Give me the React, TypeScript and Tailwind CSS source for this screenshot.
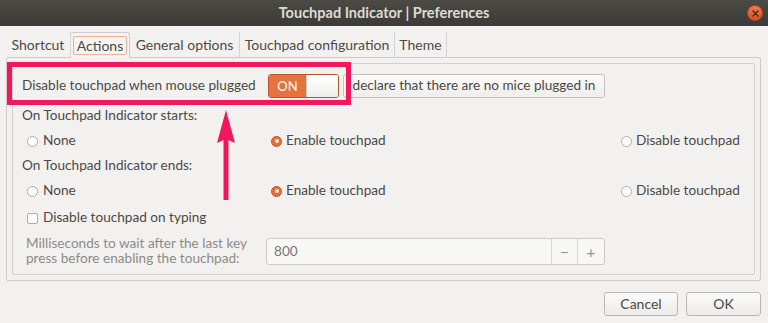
import React from "react";

const Radio = ({ checked }: { checked?: boolean }) =>
  checked ? (
    <span className="inline-flex w-[11px] h-[11px] rounded-full bg-[#e46f3b] border border-[#c2572a] items-center justify-center shrink-0">
      <span className="w-[4px] h-[4px] rounded-full bg-[#fbe9e0]" />
    </span>
  ) : (
    <span className="inline-block w-[11px] h-[11px] rounded-full bg-white border border-[#aeaca8] shrink-0" />
  );

const RadioRow = ({ sel }: { sel: number }) => (
  <div className="flex items-center pl-[14px] h-[14px]">
    <div className="w-[244px] flex items-center gap-[5px]">
      <Radio checked={sel === 0} />
      <span>None</span>
    </div>
    <div className="w-[350px] flex items-center gap-[4px]">
      <Radio checked={sel === 1} />
      <span>Enable touchpad</span>
    </div>
    <div className="flex items-center gap-[4px]">
      <Radio checked={sel === 2} />
      <span>Disable touchpad</span>
    </div>
  </div>
);

export default function App() {
  return (
    <div className="w-[768px] h-[323px] bg-[#f2f1f0] relative overflow-hidden font-['Lato','DejaVu_Sans',sans-serif] text-[13.6px] text-[#4b4a47] leading-none">
      {/* Title bar */}
      <div className="h-[26px] bg-gradient-to-b from-[#4b4a45] to-[#3b3a36] flex items-center justify-center relative">
        <span className="font-bold text-[14.5px] text-[#dfdbd2]">Touchpad Indicator | Preferences</span>
        <div className="absolute left-[747px] top-[5px] w-[16px] h-[16px] rounded-full bg-gradient-to-b from-[#f07a4a] to-[#dd4f1e] border border-[#b8461e] flex items-center justify-center">
          <svg width="7" height="7" viewBox="0 0 7 7">
            <path d="M1 1 L6 6 M6 1 L1 6" stroke="#4a2414" strokeWidth="1.4" strokeLinecap="round" />
          </svg>
        </div>
      </div>

      {/* Tabs */}
      <div className="flex pl-[6px] pt-[6px] h-[31px] text-[14px]">
        <div className="w-[65px] h-[25px] flex items-center justify-center border-r border-[#d6d4d1]">Shortcut</div>
        <div className="w-[59px] flex items-center justify-center border-t border-r border-[#cfcdca] rounded-t-[3px] bg-[#f5f4f3] relative z-10 -mb-[1px] h-[26px]">
          <span className="border border-[#eab196] rounded-[2px] px-[3px] h-[19px] flex items-center">Actions</span>
        </div>
        <div className="w-[110px] h-[25px] flex items-center justify-center border-r border-[#d6d4d1]">General options</div>
        <div className="w-[155px] h-[25px] flex items-center justify-center border-r border-[#d6d4d1]">Touchpad configuration</div>
        <div className="w-[52px] h-[25px] flex items-center justify-center border-r border-[#d6d4d1]">Theme</div>
      </div>

      {/* Notebook frame */}
      <div className="ml-[6px] mr-[7px] h-[224px] border border-[#cdcbc8] rounded-[2px] p-[5px]">
        <div className="h-[212px] border border-[#d3d1ce] rounded-[2px] flex flex-col">
          <div className="pt-[10px] flex items-center h-[34px] pl-[9px]">
            <div className="w-[246px] h-[24px] flex items-center whitespace-nowrap">Disable touchpad when mouse plugged</div>
            <div className="w-[71px] h-[24px] flex rounded-[3px] border border-[#b7532a] overflow-hidden">
              <div className="w-[37px] bg-[#e6733f] text-white flex items-center justify-center text-[13px]">ON</div>
              <div className="flex-1 bg-gradient-to-b from-[#ffffff] to-[#efeeed] border-l border-[#c9c7c3]" />
            </div>
            <div className="ml-[4px] w-[262px] h-[24px] rounded-[3px] border border-[#c3c1bd] bg-gradient-to-b from-[#fbfbfa] to-[#efeeec] flex items-center justify-center whitespace-nowrap">
              declare that there are no mice plugged in
            </div>
          </div>
          <div className="h-[36px] flex items-center pl-[9px]">On Touchpad Indicator starts:</div>
          <RadioRow sel={1} />
          <div className="h-[36px] flex items-center pl-[9px]">On Touchpad Indicator ends:</div>
          <RadioRow sel={1} />
          <div className="h-[40px] flex items-center pl-[14px] gap-[5px]">
            <span className="w-[11px] h-[11px] rounded-[2px] border border-[#aeaca8] bg-white shrink-0" />
            <span>Disable touchpad on typing</span>
          </div>
          <div className="h-[27px] flex items-center pl-[13px]">
            <div className="w-[240px] flex flex-col text-[#8e8b87] whitespace-nowrap">
              <span className="h-[15px] flex items-center">Milliseconds to wait after the last key</span>
              <span className="h-[15px] flex items-center">press before enabling the touchpad:</span>
            </div>
            <div className="w-[339px] h-[27px] rounded-[3px] border border-[#cdcbc8] bg-[#f7f7f6] flex items-center">
              <span className="flex-1 pl-[7px] text-[#7a7874]">800</span>
              <span className="w-[26px] h-full border-l border-[#d8d6d3] flex items-center justify-center text-[#9a9894] text-[16px]">−</span>
              <span className="w-[27px] h-full border-l border-[#d8d6d3] flex items-center justify-center text-[#9a9894] text-[16px]">+</span>
            </div>
          </div>
        </div>
      </div>

      {/* Bottom buttons */}
      <div className="flex justify-end gap-[8px] pr-[7px] pt-[11px] text-[14px]">
        <div className="w-[74px] h-[24px] rounded-[3px] border border-[#b9b7b3] bg-gradient-to-b from-[#fbfbfa] to-[#ecebe9] flex items-center justify-center">Cancel</div>
        <div className="w-[75px] h-[24px] rounded-[3px] border border-[#b9b7b3] bg-gradient-to-b from-[#fbfbfa] to-[#ecebe9] flex items-center justify-center">OK</div>
      </div>

      {/* Annotation: red box */}
      <div className="absolute left-[7px] top-[62px] w-[344px] h-[43px] border-[5px] border-[#f0185a] pointer-events-none" />
      {/* Annotation: arrow */}
      <svg className="absolute left-[210px] top-[106px] pointer-events-none" width="32" height="98" viewBox="0 0 32 98">
        <path d="M16 4 L25 37 L16 33 L7 37 Z" fill="#f0185a" />
        <rect x="13.5" y="32" width="5" height="62" fill="#f0185a" />
      </svg>
    </div>
  );
}
